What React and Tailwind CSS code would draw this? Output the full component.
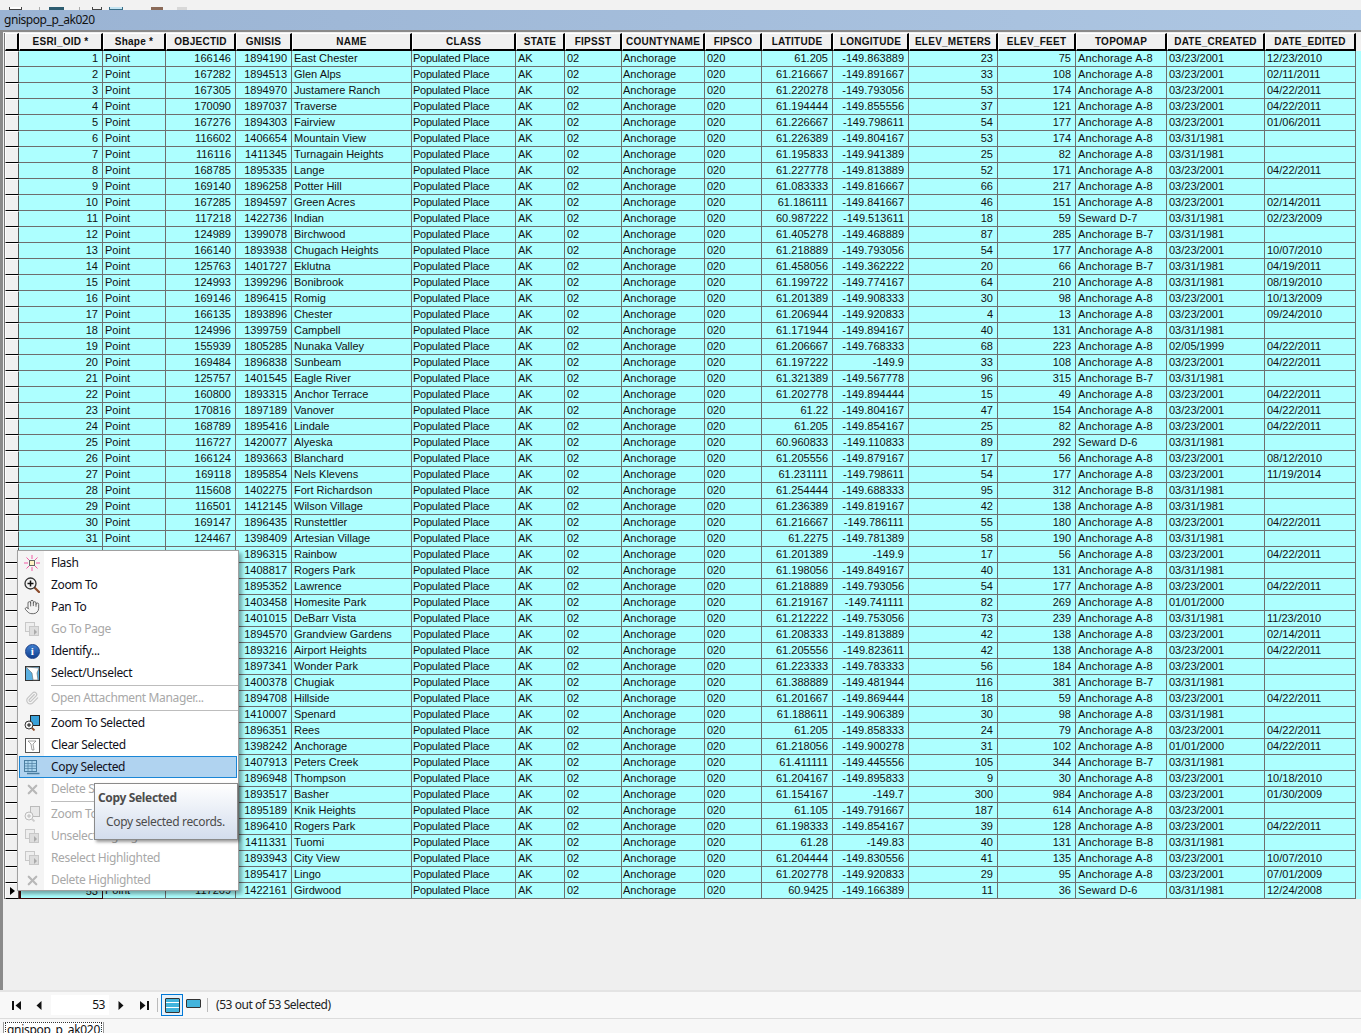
import React from 'react';
import { Hand, Paperclip, X } from 'lucide-react';

const rawRows = `166146|1894190|East Chester|61.205|-149.863889|23|75|Anchorage A-8|03/23/2001|12/23/2010
167282|1894513|Glen Alps|61.216667|-149.891667|33|108|Anchorage A-8|03/23/2001|02/11/2011
167305|1894970|Justamere Ranch|61.220278|-149.793056|53|174|Anchorage A-8|03/23/2001|04/22/2011
170090|1897037|Traverse|61.194444|-149.855556|37|121|Anchorage A-8|03/23/2001|04/22/2011
167276|1894303|Fairview|61.226667|-149.798611|54|177|Anchorage A-8|03/23/2001|01/06/2011
116602|1406654|Mountain View|61.226389|-149.804167|53|174|Anchorage A-8|03/31/1981|
116116|1411345|Turnagain Heights|61.195833|-149.941389|25|82|Anchorage A-8|03/31/1981|
168785|1895335|Lange|61.227778|-149.813889|52|171|Anchorage A-8|03/23/2001|04/22/2011
169140|1896258|Potter Hill|61.083333|-149.816667|66|217|Anchorage A-8|03/23/2001|
167285|1894597|Green Acres|61.186111|-149.841667|46|151|Anchorage A-8|03/23/2001|02/14/2011
117218|1422736|Indian|60.987222|-149.513611|18|59|Seward D-7|03/31/1981|02/23/2009
124989|1399078|Birchwood|61.405278|-149.468889|87|285|Anchorage B-7|03/31/1981|
166140|1893938|Chugach Heights|61.218889|-149.793056|54|177|Anchorage A-8|03/23/2001|10/07/2010
125763|1401727|Eklutna|61.458056|-149.362222|20|66|Anchorage B-7|03/31/1981|04/19/2011
124993|1399296|Bonibrook|61.199722|-149.774167|64|210|Anchorage A-8|03/31/1981|08/19/2010
169146|1896415|Romig|61.201389|-149.908333|30|98|Anchorage A-8|03/23/2001|10/13/2009
166135|1893896|Chester|61.206944|-149.920833|4|13|Anchorage A-8|03/23/2001|09/24/2010
124996|1399759|Campbell|61.171944|-149.894167|40|131|Anchorage A-8|03/31/1981|
155939|1805285|Nunaka Valley|61.206667|-149.768333|68|223|Anchorage A-8|02/05/1999|04/22/2011
169484|1896838|Sunbeam|61.197222|-149.9|33|108|Anchorage A-8|03/23/2001|04/22/2011
125757|1401545|Eagle River|61.321389|-149.567778|96|315|Anchorage B-7|03/31/1981|
160800|1893315|Anchor Terrace|61.202778|-149.894444|15|49|Anchorage A-8|03/23/2001|04/22/2011
170816|1897189|Vanover|61.22|-149.804167|47|154|Anchorage A-8|03/23/2001|04/22/2011
168789|1895416|Lindale|61.205|-149.854167|25|82|Anchorage A-8|03/23/2001|04/22/2011
116727|1420077|Alyeska|60.960833|-149.110833|89|292|Seward D-6|03/31/1981|
166124|1893663|Blanchard|61.205556|-149.879167|17|56|Anchorage A-8|03/23/2001|08/12/2010
169118|1895854|Nels Klevens|61.231111|-149.798611|54|177|Anchorage A-8|03/23/2001|11/19/2014
115608|1402275|Fort Richardson|61.254444|-149.688333|95|312|Anchorage B-8|03/31/1981|
116501|1412145|Wilson Village|61.236389|-149.819167|42|138|Anchorage A-8|03/31/1981|
169147|1896435|Runstettler|61.216667|-149.786111|55|180|Anchorage A-8|03/23/2001|04/22/2011
124467|1398409|Artesian Village|61.2275|-149.781389|58|190|Anchorage A-8|03/31/1981|
|1896315|Rainbow|61.201389|-149.9|17|56|Anchorage A-8|03/23/2001|04/22/2011
|1408817|Rogers Park|61.198056|-149.849167|40|131|Anchorage A-8|03/31/1981|
|1895352|Lawrence|61.218889|-149.793056|54|177|Anchorage A-8|03/23/2001|04/22/2011
|1403458|Homesite Park|61.219167|-149.741111|82|269|Anchorage A-8|01/01/2000|
|1401015|DeBarr Vista|61.212222|-149.753056|73|239|Anchorage A-8|03/31/1981|11/23/2010
|1894570|Grandview Gardens|61.208333|-149.813889|42|138|Anchorage A-8|03/23/2001|02/14/2011
|1893216|Airport Heights|61.205556|-149.823611|42|138|Anchorage A-8|03/23/2001|04/22/2011
|1897341|Wonder Park|61.223333|-149.783333|56|184|Anchorage A-8|03/23/2001|
|1400378|Chugiak|61.388889|-149.481944|116|381|Anchorage B-7|03/31/1981|
|1894708|Hillside|61.201667|-149.869444|18|59|Anchorage A-8|03/23/2001|04/22/2011
|1410007|Spenard|61.188611|-149.906389|30|98|Anchorage A-8|03/31/1981|
|1896351|Rees|61.205|-149.858333|24|79|Anchorage A-8|03/23/2001|04/22/2011
|1398242|Anchorage|61.218056|-149.900278|31|102|Anchorage A-8|01/01/2000|04/22/2011
|1407913|Peters Creek|61.411111|-149.445556|105|344|Anchorage B-7|03/31/1981|
|1896948|Thompson|61.204167|-149.895833|9|30|Anchorage A-8|03/23/2001|10/18/2010
|1893517|Basher|61.154167|-149.7|300|984|Anchorage A-8|03/23/2001|01/30/2009
|1895189|Knik Heights|61.105|-149.791667|187|614|Anchorage A-8|03/23/2001|
|1896410|Rogers Park|61.198333|-149.854167|39|128|Anchorage A-8|03/23/2001|04/22/2011
|1411331|Tuomi|61.28|-149.83|40|131|Anchorage B-8|03/31/1981|
|1893943|City View|61.204444|-149.830556|41|135|Anchorage A-8|03/23/2001|10/07/2010
|1895417|Lingo|61.202778|-149.920833|29|95|Anchorage A-8|03/23/2001|07/01/2009
117269|1422161|Girdwood|60.9425|-149.166389|11|36|Seward D-6|03/31/1981|12/24/2008`;

const rows = rawRows.split('\n').map((line) => line.split('|'));

const headers = ['ESRI_OID *', 'Shape *', 'OBJECTID', 'GNISIS', 'NAME', 'CLASS', 'STATE', 'FIPSST', 'COUNTYNAME', 'FIPSCO', 'LATITUDE', 'LONGITUDE', 'ELEV_METERS', 'ELEV_FEET', 'TOPOMAP', 'DATE_CREATED', 'DATE_EDITED'];

const gridCols = 'grid grid-cols-[14px_84px_63px_70px_56px_120px_104px_49px_57px_83px_57px_71px_76px_89px_78px_91px_98px_91px]';

const Cell = ({ children, right, active, tight }) => (
  <div className={`h-4 whitespace-nowrap overflow-hidden border-r border-b ${active ? 'border-[#3a0a0a] border-2 leading-[13px]' : 'border-[#6e6e6e] leading-[15px]'} ${right ? 'text-right pr-[4px]' : tight ? 'pl-[1px]' : 'pl-[2px]'}`}>
    {children}
  </div>
);

const Row = ({ row, index }) => {
  const [objectId, gnis, name, lat, lon, meters, feet, topo, created, edited] = row;
  const last = index === 52;
  return (
    <div className={`${gridCols} bg-[#adffff]`}>
      <div className="h-4 bg-[#f0f0f0] border-t border-l border-t-white border-l-white border-b border-r border-b-black border-r-[#555] flex items-center justify-center">
        {last && <div className="w-0 h-0 border-y-[4px] border-y-transparent border-l-[5px] border-l-black"></div>}
      </div>
      <Cell right active={last}>{index + 1}</Cell>
      <Cell>Point</Cell>
      <Cell right>{objectId}</Cell>
      <Cell right>{gnis}</Cell>
      <Cell>{name}</Cell>
      <Cell tight><span className="tracking-[-0.25px]">Populated Place</span></Cell>
      <Cell>AK</Cell>
      <Cell>02</Cell>
      <Cell tight>Anchorage</Cell>
      <Cell>020</Cell>
      <Cell right>{lat}</Cell>
      <Cell right>{lon}</Cell>
      <Cell right>{meters}</Cell>
      <Cell right>{feet}</Cell>
      <Cell><span className="tracking-[0.15px]">{topo}</span></Cell>
      <Cell>{created}</Cell>
      <Cell>{edited}</Cell>
    </div>
  );
};

const HeaderRow = () => (
  <div className={`${gridCols} bg-[#f0f0f0]`}>
    <div className="h-[18px] border-t border-l border-t-white border-l-white border-b-2 border-r-2 border-b-black border-r-black"></div>
    {headers.map((h) => (
      <div key={h} className="h-[18px] border-t border-l border-t-white border-l-white border-b-2 border-r-2 border-b-black border-r-black text-center font-bold text-[10px] leading-[15px] tracking-[0.25px] whitespace-nowrap overflow-hidden">
        {h}
      </div>
    ))}
  </div>
);

const FlashIcon = () => (
  <svg width="16" height="16" viewBox="0 0 16 16" fill="none">
    <g stroke="#f25aa5" strokeWidth="1">
      <path d="M8 0v4M8 12v4M0 8h4M12 8h4M2.5 2.5l2.5 2.5M13.500 2.500l-2.500 2.500M2.500 13.500l2.500-2.500M13.500 13.500l-2.500-2.500" />
    </g>
    <rect x="5.500" y="5.500" width="5" height="5" fill="#fff3c4" stroke="#666" />
  </svg>
);

const MagnifierIcon = () => (
  <svg width="16" height="16" viewBox="0 0 16 16" fill="none">
    <path d="M10 10l5 5" stroke="#8a4a2a" strokeWidth="2.200" strokeLinecap="round" />
    <circle cx="6.500" cy="6.500" r="5.500" fill="#f2f2f2" stroke="#333" strokeWidth="1.300" />
    <path d="M3.500 6.500h6M6.500 3.500v6" stroke="#111" strokeWidth="1.500" />
  </svg>
);

const InfoIcon = () => (
  <div className="w-[15px] h-[15px] rounded-full bg-gradient-to-b from-[#3f7fd0] to-[#12408f] border border-[#1c3f86] flex items-center justify-center text-white font-bold text-[11px] leading-none font-['Liberation_Serif',serif]">
    i
  </div>
);

const SelectIcon = ({ muted }) => (
  <svg width="15" height="15" viewBox="0 0 15 15">
    <rect x="0.500" y="0.500" width="14" height="14" fill={muted ? '#fff' : '#5bb0e0'} stroke={muted ? '#555' : '#333'} />
    <path d={muted ? 'M3 3l3 3 1 6h2l-1-6 3-3z' : 'M1 1l6 6 1 7h5l-1-7 2-5z'} fill="#fff" stroke="#666" strokeWidth="0.600" />
  </svg>
);

const PagesIcon = ({ color = '#c8c8c8' }) => (
  <svg width="16" height="16" viewBox="0 0 16 16">
    <rect x="1.500" y="1.500" width="9" height="9" fill="#eee" stroke={color} />
    <rect x="5.500" y="5.500" width="9" height="9" fill="#ddd" stroke={color} />
    <path d="M10 8l3 3-3 3z" fill="#aaa" />
  </svg>
);

const ZoomSelectedIcon = ({ muted }) => (
  <svg width="16" height="16" viewBox="0 0 16 16" fill="none">
    <rect x="6.500" y="0.500" width="9" height="10" fill={muted ? '#e8e8e8' : '#39a0d8'} stroke={muted ? '#bbb' : '#222'} />
    <circle cx="5" cy="10" r="4" fill={muted ? '#f4f4f4' : '#f2f2f2'} stroke={muted ? '#bbb' : '#333'} />
    <path d="M3 10h4M5 8v4" stroke={muted ? '#bbb' : '#111'} />
    <path d="M8 13l2.500 2.500" stroke={muted ? '#ccc' : '#8a4a2a'} strokeWidth="1.800" />
  </svg>
);

const TableIcon = () => (
  <svg width="16" height="15" viewBox="0 0 16 15">
    <rect x="0.500" y="0.500" width="12" height="11" fill="#a9d4ee" stroke="#4a7da0" />
    <path d="M0 3.500h13M0 6h13M0 8.500h13M4 0v12M8 0v12" stroke="#4a7da0" strokeWidth="0.700" />
    <path d="M3 13.500h12.500" stroke="#4a7da0" strokeWidth="1.500" />
  </svg>
);

const GreyX = () => <X size={15} strokeWidth={3.500} className="text-[#b8b8b8]" />;

const menuItems = [
  { label: 'Flash', icon: <FlashIcon /> },
  { label: 'Zoom To', icon: <MagnifierIcon /> },
  { label: 'Pan To', icon: <Hand size={16} strokeWidth={1.300} className="text-[#555]" /> },
  { label: 'Go To Page', icon: <PagesIcon />, off: true },
  { label: 'Identify...', icon: <InfoIcon /> },
  { label: 'Select/Unselect', icon: <SelectIcon /> },
  { sep: true },
  { label: 'Open Attachment Manager...', icon: <Paperclip size={14} className="text-[#c4c4c4]" />, off: true },
  { sep: true },
  { label: 'Zoom To Selected', icon: <ZoomSelectedIcon /> },
  { label: 'Clear Selected', icon: <SelectIcon muted /> },
  { label: 'Copy Selected', icon: <TableIcon />, hover: true },
  { label: 'Delete Selected', icon: <GreyX />, off: true },
  { sep: true },
  { label: 'Zoom To Highlighted', icon: <ZoomSelectedIcon muted />, off: true },
  { label: 'Unselect Highlighted', icon: <PagesIcon />, off: true },
  { label: 'Reselect Highlighted', icon: <PagesIcon />, off: true },
  { label: 'Delete Highlighted', icon: <GreyX />, off: true },
];

const ContextMenu = () => (
  <div className="absolute left-[17px] top-[550px] w-[222px] h-[341px] bg-white border border-[#a0a0a0] shadow-[3px_3px_4px_rgba(0,0,0,0.35)] py-[1px] font-['Noto_Sans',sans-serif] text-[12px] tracking-[-0.35px] z-10">
    <div className="absolute left-0 top-0 bottom-0 w-[26px] bg-[#f4f4f4]"></div>
    {menuItems.map((item, i) =>
      item.sep ? (
        <div key={i} className="relative h-[3px] ml-[33px] border-t border-[#bdbdbd] translate-y-[1px]"></div>
      ) : (
        <div key={item.label} className={`relative h-[22px] flex items-center ${item.hover ? 'bg-[#b0d3f0] border border-[#1a86d6] mr-[1px] ml-[1px]' : 'border border-transparent mx-[1px]'}`}>
          <div className="w-[24px] flex justify-center shrink-0">{item.icon}</div>
          <span className={`ml-[7px] ${item.off ? 'text-[#a8a8a8]' : 'text-[#10101a]'}`}>{item.label}</span>
        </div>
      )
    )}
  </div>
);

const Tooltip = () => (
  <div className="absolute left-[94px] top-[783px] w-[144px] h-[57px] bg-gradient-to-b from-white to-[#d3dded] border border-[#8a8a8a] shadow-[2px_2px_3px_rgba(0,0,0,0.4)] font-['Noto_Sans',sans-serif] text-[12px] tracking-[-0.35px] text-[#4c4c4c] z-20">
    <div className="font-bold pl-[3px] pt-[5px] leading-[17px]">Copy Selected</div>
    <div className="pl-[11px] pt-[7px] leading-[17px] whitespace-nowrap">Copy selected records.</div>
  </div>
);

const FirstIcon = ({ flip }) => (
  <svg width="10" height="9" viewBox="0 0 10 9" className={flip ? 'rotate-180' : ''}>
    <rect x="0" y="0" width="2" height="9" fill="#111" />
    <path d="M9 0v9L3.500 4.500z" fill="#111" />
  </svg>
);

const PrevIcon = ({ flip }) => (
  <svg width="6" height="9" viewBox="0 0 6 9" className={flip ? 'rotate-180' : ''}>
    <path d="M5.500 0v9L0.500 4.500z" fill="#111" />
  </svg>
);

const ViewIcon = ({ small }) => (
  <div className={`${small ? 'w-[15px] h-[9px]' : 'w-[15px] h-[15px]'} border border-[#333] rounded-[1px] flex flex-col bg-white overflow-hidden`}>
    <div className="flex-1 bg-[#43b4dc]"></div>
    {!small && <div className="h-[1px] bg-white"></div>}
    {!small && <div className="flex-1 bg-[#43b4dc]"></div>}
    {!small && <div className="h-[1px] bg-white"></div>}
    {!small && <div className="flex-1 bg-[#43b4dc]"></div>}
  </div>
);

const TopStrip = () => (
  <div className="h-[10px] bg-[#f2f2f2] flex items-end overflow-hidden relative">
    <div className="ml-[9px] w-[13px] h-[3px] border border-t-0 border-[#444] bg-white"></div>
    <div className="ml-[17px] w-[1px] h-[3px] bg-[#aaa]"></div>
    <div className="ml-[9px] w-[15px] h-[3px] bg-[#2c5c70]"></div>
    <div className="ml-[15px] w-[1px] h-[3px] bg-[#aaa]"></div>
    <div className="ml-[12px] w-[10px] h-[3px] border border-t-0 border-[#444]"></div>
    <div className="ml-[7px] w-[14px] h-[3px] border border-t-0 border-[#3a6f88] bg-[#c4e4f2]"></div>
    <div className="ml-[28px] w-[12px] h-[3px] bg-[#8a6a58]"></div>
    <div className="ml-[14px] w-[10px] h-[3px] bg-[#d8d8d8]"></div>
  </div>
);

const App = () => {
  return (
    <div className="relative w-[1361px] h-[1033px] overflow-hidden bg-[#efefef] font-['Liberation_Sans',Arial,sans-serif] text-[11px] text-[#111] flex flex-col">
      <TopStrip />
      <div className="h-[20px] shrink-0 bg-gradient-to-r from-[#9ab3d3] to-[#aec7e3] pl-[4px] font-['Noto_Sans',sans-serif] text-[12px] tracking-[-0.45px] leading-[19px] text-[#111]">
        gnispop_p_ak020
      </div>
      <div className="flex-1 border-l-[3px] border-[#8a8a8a] bg-[#efefef] flex flex-col min-h-0">
        <div className="h-[2px] bg-[#8a8a8a] -ml-[3px]"></div>
        <div className="flex-1 pl-[1px] pt-[1px]">
          <div className="border-l border-[#777]">
            <HeaderRow />
            {rows.map((row, i) => (
              <Row key={i} row={row} index={i} />
            ))}
          </div>
        </div>
      </div>
      <div className="h-[29px] shrink-0 border-t-2 border-[#e4e4e4] bg-[#f8f8f8] border-b border-b-[#dcdcdc] flex items-center text-[12px] tracking-[-0.45px] font-['Noto_Sans',sans-serif]">
        <div className="ml-[12px]"><FirstIcon /></div>
        <div className="ml-[14px]"><PrevIcon /></div>
        <div className="ml-[9px] w-[58px] h-[20px] bg-white text-right pr-[4px] leading-[20px]">53</div>
        <div className="ml-[9px]"><PrevIcon flip /></div>
        <div className="ml-[15px]"><FirstIcon flip /></div>
        <div className="ml-[8px] w-[1px] h-[14px] bg-[#bbb]"></div>
        <div className="ml-[3px] w-[22px] h-[22px] border border-[#0078d7] bg-[#e5f1fb] flex items-center justify-center"><ViewIcon /></div>
        <div className="ml-[3px] -mt-[4px]"><ViewIcon small /></div>
        <div className="ml-[6px] w-[1px] h-[14px] bg-[#bbb]"></div>
        <div className="ml-[8px] text-[#222]">(53 out of 53 Selected)</div>
      </div>
      <div className="h-[14px] shrink-0 bg-[#f7f7f7] pl-[3px] overflow-hidden">
        <div className="w-[101px] h-[20px] border-l border-r border-[#999] bg-white px-[1px]">
          <div className="border border-dotted border-[#333] h-[18px] mt-[3px] text-[12px] tracking-[-0.3px] leading-[14px] text-center font-['Noto_Sans',sans-serif]">gnispop_p_ak020</div>
        </div>
      </div>
      <ContextMenu />
      <Tooltip />
    </div>
  );
};

export default App;
